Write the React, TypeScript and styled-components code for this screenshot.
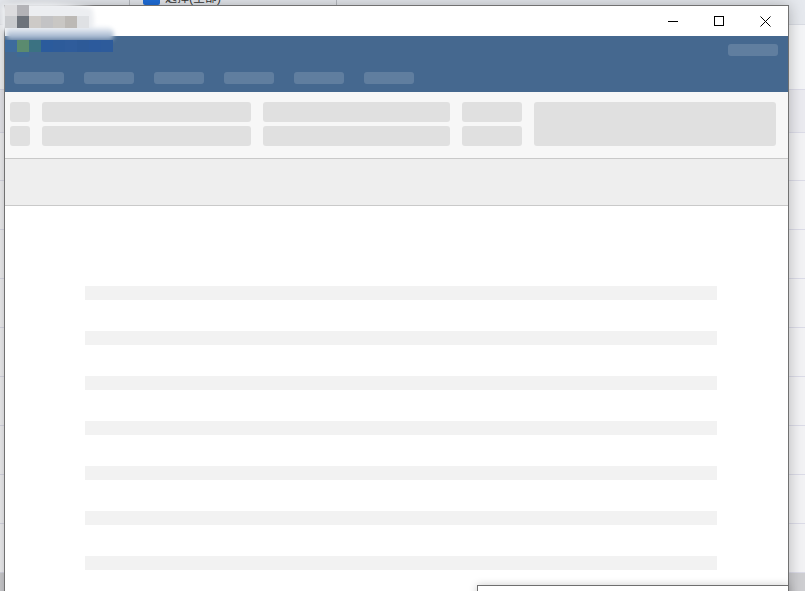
import React from "react";
import styled, { createGlobalStyle } from "styled-components";

const GlobalStyle = createGlobalStyle`
  html, body { margin: 0; padding: 0; }
  body {
    width: 805px;
    height: 591px;
    overflow: hidden;
    font-family: "Liberation Sans", "Noto Sans CJK SC", Arial, sans-serif;
    background: #eef0f3;
  }
`;

const Desktop = styled.div`
  position: relative;
  width: 805px;
  height: 591px;
  overflow: hidden;
  background: #f2f3f5;
`;

/* ---------- background application (behind the window) ---------- */
const BgApp = styled.div`
  display: flex;
  flex-direction: column;
  height: 100%;
`;

const BgTopBar = styled.div`
  height: 25px;
  flex: none;
  display: flex;
  align-items: flex-start;
  background: #e6e9ee;
  border-bottom: 1px solid #d9dce3;
  box-sizing: border-box;
`;

const BgCell = styled.div<{ $w: number }>`
  width: ${(p) => p.$w}px;
  height: 5px;
  flex: none;
  display: flex;
  align-items: flex-end;
  gap: 5px;
  border-right: 1px solid #b9bcc2;
  box-sizing: border-box;
  padding-left: 13px;
`;

const BgCheck = styled.span`
  width: 17px;
  height: 16px;
  margin-top: -12px;
  background: #1f6fdc;
  border-radius: 2px;
  flex: none;
`;

const BgLabel = styled.span`
  font-size: 12px;
  line-height: 14px;
  margin-top: -10px;
  color: #333;
  white-space: nowrap;
`;

const BgBand = styled.div<{ $h: number; $bg: string }>`
  height: ${(p) => p.$h}px;
  flex: none;
  background: ${(p) => p.$bg};
  border-bottom: 1px solid #dcdce8;
  box-sizing: border-box;
`;

const BgFooter = styled.div`
  flex: 1;
  background: #cfcfd2;
`;

/* ---------- main window ---------- */
const Window = styled.div`
  position: absolute;
  left: 4px;
  top: 5px;
  width: 785px;
  height: 610px;
  box-sizing: border-box;
  border: 1px solid #717171;
  background: #ffffff;
  display: flex;
  flex-direction: column;
  box-shadow: 0 0 14px rgba(0, 0, 0, 0.26);
`;

const TitleBar = styled.div`
  height: 30px;
  flex: none;
  display: flex;
  justify-content: flex-end;
  background: #ffffff;
`;

const CaptionButton = styled.div`
  width: 46px;
  height: 30px;
  display: flex;
  align-items: center;
  justify-content: center;
`;

const Header = styled.div`
  flex: none;
  background: #45688f;
  padding: 8px 10px 8px 9px;
  display: flex;
  flex-direction: column;
  gap: 16px;
`;

const HeaderTop = styled.div`
  height: 12px;
  display: flex;
  justify-content: flex-end;
`;

const NavRow = styled.div`
  display: flex;
  gap: 20px;
`;

const Pill = styled.div`
  width: 50px;
  height: 12px;
  border-radius: 3px;
  background: rgba(255, 255, 255, 0.15);
`;

const Toolbar = styled.div`
  flex: none;
  height: 67px;
  box-sizing: border-box;
  background: #f7f7f7;
  border-bottom: 1px solid #c9c9c9;
  padding: 10px 12px 0 5px;
  display: flex;
  gap: 12px;
`;

const Stack = styled.div`
  display: flex;
  flex-direction: column;
  gap: 4px;
`;

const Block = styled.div<{ $w?: number; $h?: number }>`
  width: ${(p) => (p.$w ? `${p.$w}px` : "auto")};
  flex: ${(p) => (p.$w ? "none" : "1")};
  height: ${(p) => p.$h ?? 20}px;
  border-radius: 3px;
  background: #e0e0e0;
`;

const Band = styled.div`
  flex: none;
  height: 47px;
  box-sizing: border-box;
  background: #eeeeee;
  border-bottom: 1px solid #c9c9c9;
`;

const Content = styled.div`
  flex: 1;
  background: #ffffff;
  padding: 80px 0 0 80px;
  display: flex;
  flex-direction: column;
  gap: 31px;
`;

const Line = styled.div`
  width: 632px;
  height: 14px;
  background: #f2f2f2;
`;

/* ---------- overlays ---------- */
const Mosaic = styled.svg`
  position: absolute;
  left: 0;
  top: 0;
`;

const SubWindow = styled.div`
  position: absolute;
  left: 477px;
  top: 585px;
  width: 312px;
  height: 40px;
  box-sizing: border-box;
  border: 1px solid #6f6f6f;
  background: #ffffff;
  padding: 3px 0 0 30px;
  font-size: 12px;
  color: #222;
  white-space: nowrap;
  box-shadow: 0 0 8px rgba(0, 0, 0, 0.2);
`;

const MinimizeIcon = () => (
  <svg width="10" height="10" viewBox="0 0 10 10">
    <path d="M0 5.5h10" stroke="#000" strokeWidth="1" />
  </svg>
);
const MaximizeIcon = () => (
  <svg width="10" height="10" viewBox="0 0 10 10">
    <rect x="0.5" y="0.5" width="9" height="9" fill="none" stroke="#000" strokeWidth="1" />
  </svg>
);
const CloseIcon = () => (
  <svg width="11" height="11" viewBox="0 0 11 11">
    <path d="M0.5 0.5l10 10M10.5 0.5l-10 10" stroke="#000" strokeWidth="1" />
  </svg>
);

const topTiles = [
  { x: 5, c: "#dcdcde" },
  { x: 17, c: "#b3b3b7" },
];
const midTiles = [
  { x: 5, c: "#c9cbce" },
  { x: 17, c: "#6d737b" },
  { x: 29, c: "#cdcac7" },
  { x: 41, c: "#c3c3c5" },
  { x: 53, c: "#c9c7c4" },
  { x: 65, c: "#bcb9b5" },
  { x: 77, c: "#dfe1e4" },
];
const blueTiles = [
  { x: 5, c: "#3d6b9d" },
  { x: 17, c: "#5b8b6f" },
  { x: 29, c: "#3b7282" },
  { x: 41, c: "#2b5b9c" },
  { x: 53, c: "#2d5b9a" },
  { x: 65, c: "#2f5c9b" },
  { x: 77, c: "#2d5a98" },
  { x: 89, c: "#2c5a9c" },
  { x: 101, c: "#2d5b9b" },
];

const bgRows = [
  { h: 65, bg: "#f4f5f7" },
  { h: 43, bg: "#ebebf0" },
  { h: 48, bg: "#f3f3f5" },
  { h: 49, bg: "#f3f3f5" },
  { h: 49, bg: "#f3f3f5" },
  { h: 49, bg: "#f3f3f5" },
  { h: 49, bg: "#f3f3f5" },
  { h: 49, bg: "#f3f3f5" },
  { h: 49, bg: "#f3f3f5" },
  { h: 49, bg: "#f3f3f5" },
  { h: 49, bg: "#f3f3f5" },
];

export default function App() {
  return (
    <>
      <GlobalStyle />
      <Desktop>
        <BgApp>
          <BgTopBar>
            <BgCell $w={130} />
            <BgCell $w={207}>
              <BgCheck />
              <BgLabel>选择(全部)</BgLabel>
            </BgCell>
          </BgTopBar>
          {bgRows.map((r, i) => (
            <BgBand key={i} $h={r.h} $bg={r.bg} />
          ))}
          <BgFooter />
        </BgApp>

        <Window>
          <TitleBar>
            <CaptionButton>
              <MinimizeIcon />
            </CaptionButton>
            <CaptionButton>
              <MaximizeIcon />
            </CaptionButton>
            <CaptionButton>
              <CloseIcon />
            </CaptionButton>
          </TitleBar>
          <Header>
            <HeaderTop>
              <Pill />
            </HeaderTop>
            <NavRow>
              {Array.from({ length: 6 }).map((_, i) => (
                <Pill key={i} />
              ))}
            </NavRow>
          </Header>
          <Toolbar>
            <Stack>
              <Block $w={20} />
              <Block $w={20} />
            </Stack>
            <Stack>
              <Block $w={209} />
              <Block $w={209} />
            </Stack>
            <Stack>
              <Block $w={187} />
              <Block $w={187} />
            </Stack>
            <Stack>
              <Block $w={60} />
              <Block $w={60} />
            </Stack>
            <Block $h={44} />
          </Toolbar>
          <Band />
          <Content>
            {Array.from({ length: 7 }).map((_, i) => (
              <Line key={i} />
            ))}
          </Content>
        </Window>

        <Mosaic width="130" height="62" viewBox="0 0 130 62">
          <defs>
            <filter id="soft" x="-20%" y="-50%" width="140%" height="200%">
              <feGaussianBlur stdDeviation="2.2" />
            </filter>
            <linearGradient id="halo" x1="0" y1="0" x2="0" y2="1">
              <stop offset="0" stopColor="#f3f5f8" />
              <stop offset="0.45" stopColor="#bccadc" />
              <stop offset="0.7" stopColor="#9fb3cc" />
              <stop offset="1" stopColor="#45688f" />
            </linearGradient>
          </defs>
          <path
            d="M4 4 Q0 6 1 14 L1 30 Q40 40 92 34 Q96 20 92 8 Q60 0 4 4 Z"
            fill="#eceef1"
            filter="url(#soft)"
          />
          <rect x="6" y="27" width="108" height="15" rx="7" fill="url(#halo)" filter="url(#soft)" />
          {topTiles.map((t) => (
            <rect key={`a${t.x}`} x={t.x} y={5} width={12} height={11} fill={t.c} />
          ))}
          {midTiles.map((t) => (
            <rect key={`b${t.x}`} x={t.x} y={16} width={12} height={12} fill={t.c} />
          ))}
          {blueTiles.map((t) => (
            <rect key={`c${t.x}`} x={t.x} y={40} width={12} height={12} fill={t.c} />
          ))}
          <rect x="17" y="52" width="12" height="5" fill="#3f6a94" />
        </Mosaic>

        <SubWindow>Loading list, filter by date and type</SubWindow>
      </Desktop>
    </>
  );
}
